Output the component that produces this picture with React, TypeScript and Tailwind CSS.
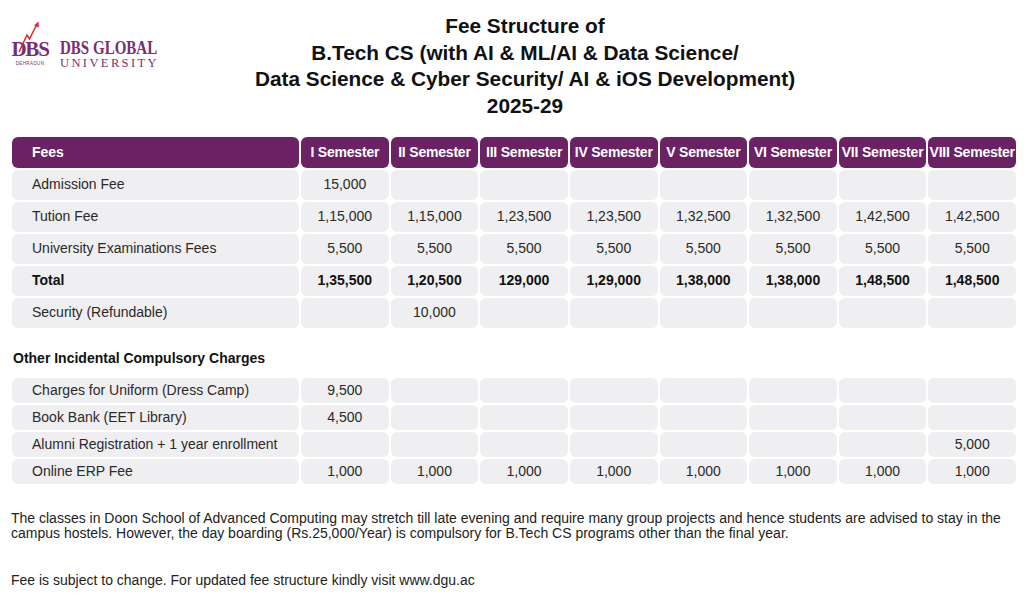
import React from "react";

const sems = ["I Semester", "II Semester", "III Semester", "IV Semester", "V Semester", "VI Semester", "VII Semester", "VIII Semester"];

const main: { label: string; vals: string[]; bold?: boolean }[] = [
  { label: "Admission Fee", vals: ["15,000", "", "", "", "", "", "", ""] },
  { label: "Tution Fee", vals: ["1,15,000", "1,15,000", "1,23,500", "1,23,500", "1,32,500", "1,32,500", "1,42,500", "1,42,500"] },
  { label: "University Examinations Fees", vals: ["5,500", "5,500", "5,500", "5,500", "5,500", "5,500", "5,500", "5,500"] },
  { label: "Total", vals: ["1,35,500", "1,20,500", "129,000", "1,29,000", "1,38,000", "1,38,000", "1,48,500", "1,48,500"], bold: true },
  { label: "Security (Refundable)", vals: ["", "10,000", "", "", "", "", "", ""] },
];

const other: { label: string; vals: string[] }[] = [
  { label: "Charges for Uniform (Dress Camp)", vals: ["9,500", "", "", "", "", "", "", ""] },
  { label: "Book Bank (EET Library)", vals: ["4,500", "", "", "", "", "", "", ""] },
  { label: "Alumni Registration + 1 year enrollment", vals: ["", "", "", "", "", "", "", "5,000"] },
  { label: "Online ERP Fee", vals: ["1,000", "1,000", "1,000", "1,000", "1,000", "1,000", "1,000", "1,000"] },
];

function Logo() {
  return (
    <div className="flex items-start pl-[12px] pt-[39px] whitespace-nowrap">
      <div className="relative flex flex-col items-center w-[36px]">
        <span className="font-['Liberation_Serif',serif] text-[21px] leading-[21px] font-bold text-[#7a2d72] tracking-[-1.2px]">DBS</span>
        <span className="text-[4.5px] leading-[6px] tracking-[0.4px] text-[#7a2d72] font-['Liberation_Sans',sans-serif] mt-[1px]">DEHRADUN</span>
        <svg className="absolute left-0 -top-[18px]" width="32" height="34" viewBox="0 0 32 34">
          <path d="M7 31 L15 14 L17.5 18 L24.5 4" stroke="#e0242b" strokeWidth="1.5" fill="none" strokeLinejoin="miter" />
          <path d="M22 4.5 L26.5 0.5 L26.8 6.5 Z" fill="#e0242b" />
        </svg>
      </div>
      <div className="w-px h-[25px] bg-[#8a4a84] ml-[5px] mr-[7px] mt-[2px]" />
      <div className="flex flex-col font-['Liberation_Serif',serif] text-[#7a2d72]">
        <span className="text-[19px] leading-[17px] font-bold origin-left scale-x-[0.79]">DBS GLOBAL</span>
        <span className="text-[12.5px] leading-[13px] tracking-[2.4px] mt-[1px]">UNIVERSITY</span>
      </div>
    </div>
  );
}

function Row({ label, vals, bold, h }: { label: string; vals: string[]; bold?: boolean; h: string }) {
  const tw = bold ? "font-bold text-[#111]" : "text-[#2a2a2a]";
  return (
    <>
      <div className={`${h} bg-[#efeef0] rounded-[6px] flex items-center pl-[20px] text-[14px] ${tw}`}>{label}</div>
      {vals.map((v, i) => (
        <div key={i} className={`${h} bg-[#efeef0] rounded-[6px] flex items-center justify-center text-[14px] ${tw}`}>{v}</div>
      ))}
    </>
  );
}

export default function App() {
  return (
    <div className="w-[1027px] h-[602px] bg-white overflow-hidden font-['Liberation_Sans',Arial,sans-serif]">
      <div className="grid grid-cols-[175px_1fr_152px]">
        <Logo />
        <div className="pt-[13px] text-center text-[20.8px] leading-[26.7px] font-bold text-[#111] whitespace-nowrap">
          <div>Fee Structure of</div>
          <div>B.Tech CS (with AI &amp; ML/AI &amp; Data Science/</div>
          <div>Data Science &amp; Cyber Security/ AI &amp; iOS Development)</div>
          <div>2025-29</div>
        </div>
        <div />
      </div>

      <div className="ml-[12px] mt-[17px] w-[1004px] grid grid-cols-[287px_repeat(8,1fr)] gap-x-[2px] gap-y-[2px]">
        <div className="h-[31px] bg-[#6b2264] rounded-[6px] flex items-center pl-[20px] pt-[1px] text-white font-bold text-[14px]">Fees</div>
        {sems.map((s) => (
          <div key={s} className="h-[31px] bg-[#6b2264] rounded-[6px] flex items-center justify-center pt-[1px] text-white font-bold text-[14px] whitespace-nowrap tracking-[-0.2px]">{s}</div>
        ))}
        {main.map((r) => (
          <Row key={r.label} label={r.label} vals={r.vals} bold={r.bold} h="h-[30px]" />
        ))}
      </div>

      <div className="ml-[13px] mt-[22px] text-[14px] font-bold text-[#111] leading-[16px]">Other Incidental Compulsory Charges</div>

      <div className="ml-[12px] mt-[12px] w-[1004px] grid grid-cols-[287px_repeat(8,1fr)] gap-x-[2px] gap-y-[2px]">
        {other.map((r) => (
          <Row key={r.label} label={r.label} vals={r.vals} h="h-[25px]" />
        ))}
      </div>

      <div className="ml-[11px] mt-[27px] text-[14px] leading-[15px] text-[#222] w-[1005px]">
        The classes in Doon School of Advanced Computing may stretch till late evening and require many group projects and hence students are advised to stay in the campus hostels. However, the day boarding (Rs.25,000/Year) is compulsory for B.Tech CS programs other than the final year.
      </div>
      <div className="ml-[11px] mt-[32px] text-[14px] leading-[15px] text-[#222]">
        Fee is subject to change. For updated fee structure kindly visit www.dgu.ac
      </div>
    </div>
  );
}
